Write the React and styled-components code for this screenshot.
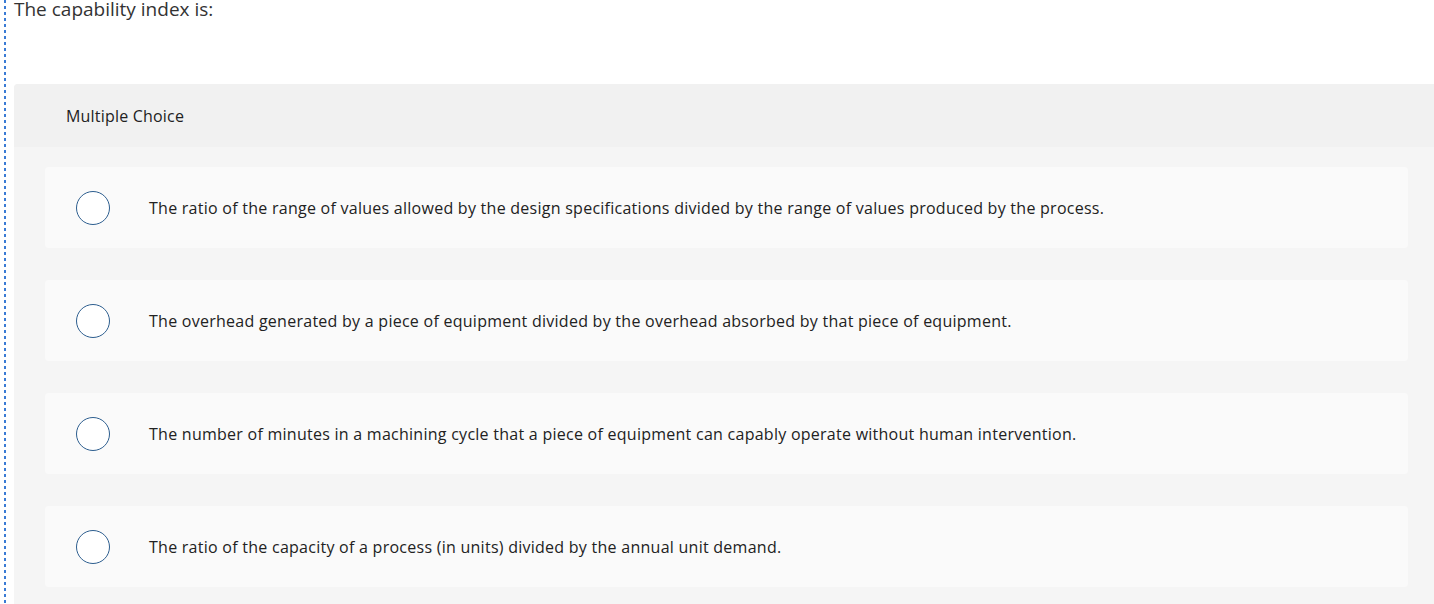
import React from "react";
import styled, { createGlobalStyle } from "styled-components";

const GlobalStyle = createGlobalStyle`
  html, body {
    margin: 0;
    padding: 0;
    background: #fff;
  }
  body {
    font-family: "Open Sans", Lato, "Liberation Sans", sans-serif;
    color: #333;
  }
`;

const choices = [
  "The ratio of the range of values allowed by the design specifications divided by the range of values produced by the process.",
  "The overhead generated by a piece of equipment divided by the overhead absorbed by that piece of equipment.",
  "The number of minutes in a machining cycle that a piece of equipment can capably operate without human intervention.",
  "The ratio of the capacity of a process (in units) divided by the annual unit demand.",
];

function App() {
  return (
    <>
      <GlobalStyle />
      <Page>
        <Question>The capability index is:</Question>
        <Panel>
          <PanelHeader>Multiple Choice</PanelHeader>
          <ChoiceList>
            {choices.map((c) => (
              <Choice key={c}>
                <Radio />
                <ChoiceText>{c}</ChoiceText>
              </Choice>
            ))}
          </ChoiceList>
        </Panel>
      </Page>
    </>
  );
}

const Page = styled.div`
  position: relative;
  height: 604px;
  overflow: hidden;
  padding-left: 14px;
  box-sizing: border-box;
  &::before {
    content: "";
    position: absolute;
    left: 4px;
    top: 0;
    bottom: 0;
    width: 2px;
    background: repeating-linear-gradient(
      to bottom,
      #3a7bd5 0 3px,
      transparent 3px 6px
    );
  }
`;

const Question = styled.div`
  font-size: 19px;
  line-height: 18px;
  height: 84px;
  color: #333;
`;

const Panel = styled.div`
  background: #f5f5f5;
  border-top-left-radius: 4px;
`;

const PanelHeader = styled.div`
  background: #f1f1f1;
  height: 63px;
  display: flex;
  align-items: center;
  padding-left: 52px;
  font-size: 16px;
  letter-spacing: 0.2px;
  color: #222;
  border-top-left-radius: 4px;
`;

const ChoiceList = styled.div`
  display: flex;
  flex-direction: column;
  gap: 32px;
  padding: 20px 26px 20px 31px;
`;

const Choice = styled.div`
  display: flex;
  align-items: center;
  height: 81px;
  background: #fafafa;
  border-radius: 4px;
  padding-left: 31px;
`;

const Radio = styled.span`
  width: 32px;
  height: 32px;
  border: 1.5px solid #2d5e8f;
  border-radius: 50%;
  background: #fff;
  flex-shrink: 0;
`;

const ChoiceText = styled.span`
  margin-left: 39px;
  font-size: 16px;
  letter-spacing: 0.26px;
  color: #222;
`;

export default App;
